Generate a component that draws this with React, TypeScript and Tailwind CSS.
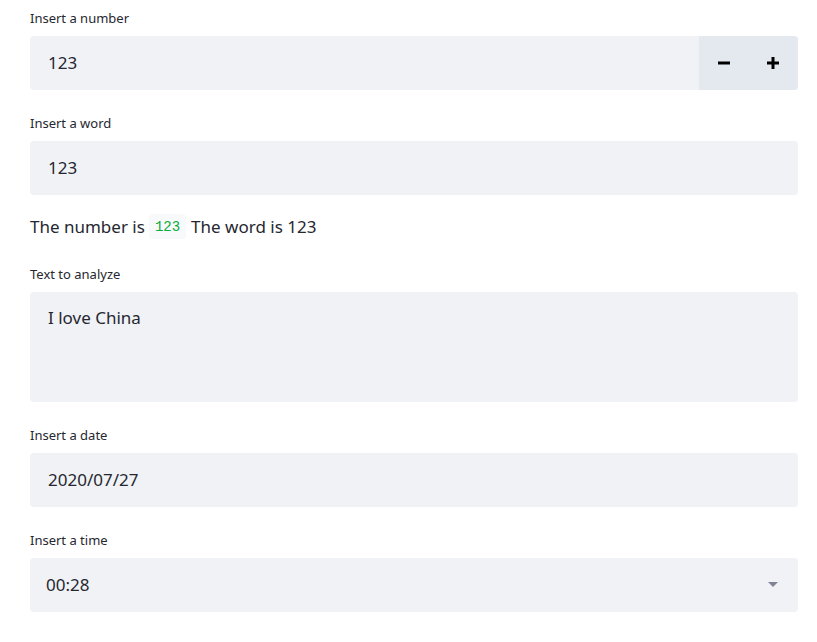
import React from "react";

const font = { fontFamily: '"Noto Sans", "Open Sans", sans-serif' };

function Label({ children }: { children: React.ReactNode }) {
  return <div className="text-[13px] leading-[16px] text-[#262730] mb-[10px]">{children}</div>;
}

export default function App() {
  return (
    <div className="bg-white w-[817px] h-[642px] pl-[30px] pr-[19px] pt-[10px] text-[#262730]" style={font}>
      <Label>Insert a number</Label>
      <div className="flex h-[54px] rounded-[4px] bg-[#f0f2f6] overflow-hidden">
        <div className="flex-1 flex items-center pl-[18px] text-[17px]">123</div>
        <div className="flex w-[99px] bg-[#e4e8ef]">
          <button className="w-[49px] flex items-center justify-center">
            <svg width="14" height="14" viewBox="0 0 14 14">
              <path d="M1 7h12" stroke="#000" strokeWidth="3" />
            </svg>
          </button>
          <button className="w-[50px] flex items-center justify-center">
            <svg width="14" height="14" viewBox="0 0 14 14">
              <path d="M1 7h12M7 1v12" stroke="#000" strokeWidth="3" />
            </svg>
          </button>
        </div>
      </div>

      <div className="mt-[25px]">
        <Label>Insert a word</Label>
        <div className="flex items-center h-[54px] rounded-[4px] bg-[#f0f2f6] pl-[18px] text-[17px]">123</div>
      </div>

      <div className="mt-[19px] text-[17px] leading-[24px] flex items-center">
        <span>The number is</span>
        <span
          className="ml-[4px] mr-[5px] inline-flex items-center h-[25px] px-[6px] rounded-[4px] bg-[#f8f9fb] text-[#09ab3b] text-[14px]"
          style={{ fontFamily: '"Liberation Mono", monospace' }}
        >
          123
        </span>
        <span>The word is 123</span>
      </div>

      <div className="mt-[27px]">
        <Label>Text to analyze</Label>
        <div className="h-[110px] rounded-[4px] bg-[#f0f2f6] pl-[18px] pt-[14px] text-[17px] leading-[24px]">I love China</div>
      </div>

      <div className="mt-[25px]">
        <Label>Insert a date</Label>
        <div className="flex items-center h-[54px] rounded-[4px] bg-[#f0f2f6] pl-[18px] text-[17px]">2020/07/27</div>
      </div>

      <div className="mt-[25px]">
        <Label>Insert a time</Label>
        <div className="flex items-center h-[54px] rounded-[4px] bg-[#f0f2f6] pl-[16px] pr-[20px] text-[17px]">
          <span className="flex-1">00:28</span>
          <svg width="10" height="6" viewBox="0 0 10 6">
            <path d="M0 0h10L5 5z" fill="#808495" />
          </svg>
        </div>
      </div>
    </div>
  );
}
